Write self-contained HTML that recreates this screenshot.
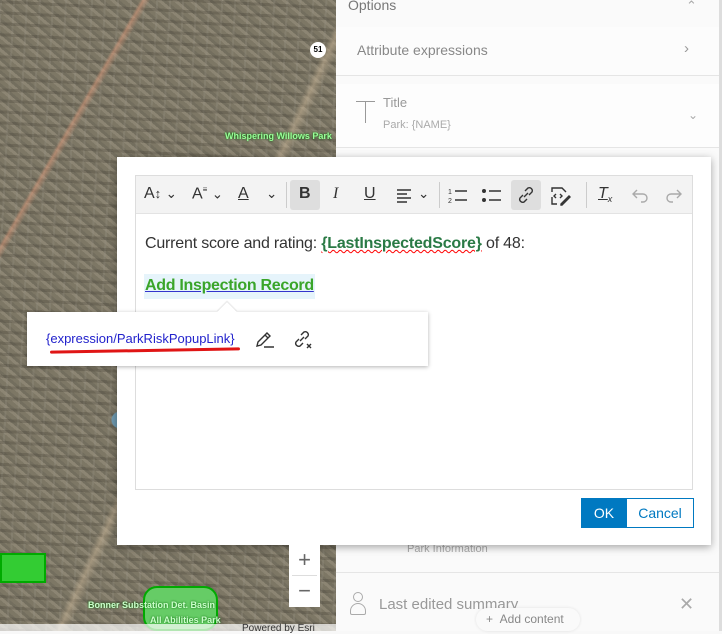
<!DOCTYPE html>
<html><head><style>
*{box-sizing:border-box;margin:0;padding:0}
body{width:722px;height:631px;overflow:hidden;position:relative;font-family:"Liberation Sans",sans-serif;background:#f8f8f8}
.map{position:absolute;left:0;top:0;width:336px;height:631px;background:
radial-gradient(circle at 120px 420px,#6f9ab0 0 8px,transparent 9px),
linear-gradient(120deg,transparent 20%,rgba(210,150,120,.6) 20.5%,transparent 21.5%),
linear-gradient(115deg,transparent 55%,rgba(200,180,150,.5) 56%,transparent 57.5%),
repeating-linear-gradient(3deg,rgba(60,55,45,.25) 0 3px,transparent 3px 11px),
repeating-linear-gradient(93deg,rgba(150,145,130,.3) 0 2px,transparent 2px 13px),
repeating-linear-gradient(40deg,#7d7765 0 4px,#8c8573 4px 7px,#736e5e 7px 10px)}
.panel{position:absolute;left:336px;top:0;width:383px;height:631px;background:#fafafa;color:#777}
.abs{position:absolute}
.modal{position:absolute;left:117px;top:157px;width:594px;height:388px;background:#fff;box-shadow:0 2px 8px rgba(0,0,0,.35)}
.editor{position:absolute;left:18px;top:18px;width:558px;height:315px;border:1px solid #ddd}
.tb{height:38px;background:#f3f3f3;border-bottom:1px solid #e3e3e3;position:relative;font-size:16px;color:#333}
.tb span{position:absolute;top:9px}
.tb svg{position:absolute;top:9px}
.hl{position:absolute;top:4px;width:30px;height:30px;background:#dedede;border-radius:3px}
.sep{position:absolute;top:6px;width:1px;height:26px;background:#ccc}
</style></head><body>
<div class="map"></div>
<div class="abs" style="left:310px;top:42px;width:16px;height:16px;border-radius:50%;background:#fff;font-size:8px;text-align:center;line-height:16px;font-weight:bold;z-index:2">51</div>
<div class="abs" style="left:225px;top:131px;font-size:9px;color:#9f9;font-weight:bold;z-index:2;text-shadow:0 0 2px #060">Whispering Willows Park</div>
<div class="abs" style="left:0;top:553px;width:46px;height:30px;background:#3c3;border:2px solid #0a0;z-index:2"></div>
<div class="abs" style="left:143px;top:586px;width:75px;height:45px;background:#6c6;border:2px solid #0a0;border-radius:14px;z-index:2"></div>
<div class="abs" style="left:88px;top:600px;font-size:9px;color:#cfc;font-weight:bold;z-index:3;text-shadow:0 0 2px #060">Bonner Substation Det. Basin</div>
<div class="abs" style="left:150px;top:615px;font-size:9px;color:#cfc;font-weight:bold;z-index:3;text-shadow:0 0 2px #060">All Abilities Park</div>
<div class="abs" style="left:0;top:624px;width:336px;height:7px;background:rgba(255,255,255,.7);z-index:3"></div>
<div class="abs" style="left:242px;top:623px;font-size:10px;color:#333;z-index:3">Powered by Esri</div>
<div class="abs" style="left:289px;top:545px;width:31px;height:62px;background:#fff;z-index:3;color:#666;font-size:22px;text-align:center;line-height:30px">+<div style="border-top:1px solid #ddd;margin:0 3px">−</div></div>

<div class="panel">
<div class="abs" style="left:12px;top:-3px;font-size:14px">Options</div>
<div class="abs" style="left:350px;top:-2px;font-size:13px;color:#aaa">⌃</div>
<div class="abs" style="left:0;top:27px;width:383px;height:49px;background:#fcfcfc;border-bottom:1px solid #e5e5e5"></div>
<div class="abs" style="left:21px;top:42px;font-size:14px;color:#888">Attribute expressions</div>
<div class="abs" style="left:348px;top:40px;font-size:15px;color:#999">›</div>
<div class="abs" style="left:0;top:84px;width:383px;height:64px;background:#fdfdfd;border-bottom:1px solid #e5e5e5"></div>
<div class="abs" style="left:20px;top:101px;width:19px;height:1px;background:#999"></div>
<div class="abs" style="left:29px;top:101px;width:1px;height:22px;background:#999"></div>
<div class="abs" style="left:47px;top:95px;font-size:13px;color:#999">Title</div>
<div class="abs" style="left:47px;top:119px;font-size:11px;color:#aaa">Park: {NAME}</div>
<div class="abs" style="left:352px;top:108px;font-size:12px;color:#aaa">⌄</div>
<div class="abs" style="left:71px;top:543px;font-size:11px;color:#aaa">Park Information</div>
<div class="abs" style="left:0;top:572px;width:383px;height:1px;background:#e5e5e5"></div>
<div class="abs" style="left:14px;top:603px;width:16px;height:12px;border:1px solid #aaa;border-radius:8px 8px 2px 2px"></div>
<div class="abs" style="left:17px;top:592px;width:10px;height:10px;border:1px solid #aaa;border-radius:50%;background:#fafafa"></div>
<div class="abs" style="left:43px;top:596px;font-size:15px;color:#999">Last edited summary</div>
<div class="abs" style="left:343px;top:594px;font-size:18px;color:#aaa">✕</div>
<div class="abs" style="left:140px;top:608px;width:104px;height:23px;background:#fafafa;border-radius:12px;box-shadow:0 0 3px rgba(0,0,0,.1);font-size:12px;color:#888;padding:4px 0 0 10px">+&nbsp;&nbsp;Add content</div>
</div>
<div class="abs" style="left:719px;top:0;width:3px;height:631px;background:#ddd"></div>

<div class="modal">
<div class="editor">
<div class="tb">
<span style="left:8px">A<span style="position:static;font-size:13px">↕</span> <small>⌄</small></span>
<span style="left:56px">A<sup style="font-size:8px">≡</sup> <small>⌄</small></span>
<span style="left:102px;text-decoration:underline">A</span><span style="left:130px"><small>⌄</small></span>
<div class="sep" style="left:150px"></div>
<div class="hl" style="left:154px"></div>
<span style="left:163px;font-weight:bold">B</span>
<span style="left:197px;font-style:italic;font-family:'Liberation Serif'">I</span>
<span style="left:228px;text-decoration:underline">U</span>
<svg style="left:258px" width="20" height="20" viewBox="0 0 20 20" stroke="#333" stroke-width="1.4"><path d="M3 5h14M3 9h10M3 13h14M3 17h10"/></svg>
<span style="left:282px"><small>⌄</small></span>
<div class="sep" style="left:303px"></div>
<svg style="left:311px" width="22" height="20" viewBox="0 0 22 20" stroke="#333" stroke-width="1.4"><path d="M8 6h12M8 15h12"/><text x="1" y="9" font-size="7" stroke="none" fill="#333">1</text><text x="1" y="18" font-size="7" stroke="none" fill="#333">2</text></svg>
<svg style="left:345px" width="22" height="20" viewBox="0 0 22 20" stroke="#333" stroke-width="1.4"><path d="M8 6h12M8 15h12"/><circle cx="3" cy="6" r="1.3" fill="#333"/><circle cx="3" cy="15" r="1.3" fill="#333"/></svg>
<div class="hl" style="left:375px"></div>
<svg style="left:380px" width="20" height="20" viewBox="0 0 20 20" fill="none" stroke="#333" stroke-width="1.4"><path d="M9 6l3-3a3 3 0 014 4l-3 3M11 14l-3 3a3 3 0 01-4-4l3-3M8 12l4-4"/></svg>
<svg style="left:413px" width="22" height="22" viewBox="0 0 22 22" fill="none" stroke="#333" stroke-width="1.4"><path d="M3 7V3h10l4 4M3 12v7h5M7 9l-2 2 2 2M11 9l2 2-2 2M12 19l8-8 1 1-8 8h-1z"/></svg>
<div class="sep" style="left:450px"></div>
<span style="left:462px;font-style:italic;text-decoration:underline">T<sub style="font-size:9px">x</sub></span>
<svg style="left:494px" width="20" height="20" viewBox="0 0 20 20" fill="none" stroke="#aaa" stroke-width="1.4"><path d="M7 5L3 9l4 4M3 9h10a4 4 0 010 8h-2"/></svg>
<svg style="left:528px" width="20" height="20" viewBox="0 0 20 20" fill="none" stroke="#aaa" stroke-width="1.4"><path d="M13 5l4 4-4 4M17 9H7a4 4 0 000 8h2"/></svg>
</div>
<div class="abs" style="left:9px;top:59px;font-size:16px;color:#333;letter-spacing:-.2px">Current score and rating: <b style="color:#2a7a45;text-decoration:underline wavy red;text-decoration-thickness:1px">{LastInspectedScore}</b> of 48:</div>
<div class="abs" style="left:8px;top:98px;height:25px;background:#e6f4fb;padding:3px 1px;font-size:16px;font-weight:bold;color:#3aa52a;text-decoration:underline;text-decoration-color:#33c;letter-spacing:-.3px">Add Inspection Record</div>
</div>
<div class="abs" style="left:464px;top:341px;width:46px;height:30px;background:#0079c1;color:#fff;font-size:14px;text-align:center;line-height:30px">OK</div>
<div class="abs" style="left:509px;top:341px;width:68px;height:30px;border:1px solid #0079c1;color:#0079c1;font-size:14px;text-align:center;line-height:28px">Cancel</div>
</div>

<div class="abs" style="left:27px;top:312px;width:401px;height:54px;background:#fff;box-shadow:0 1px 4px rgba(0,0,0,.3)"></div>
<div class="abs" style="left:220px;top:305px;width:14px;height:14px;background:#fff;transform:rotate(45deg);box-shadow:-1px -1px 1px rgba(0,0,0,.1)"></div>
<div class="abs" style="left:46px;top:331px;font-size:13px;color:#22c">{expression/ParkRiskPopupLink}</div>
<div class="abs" style="left:50px;top:349px;width:190px;height:3px;background:#e01515;border-radius:2px;transform:rotate(-1deg)"></div>
<svg class="abs" style="left:254px;top:329px" width="22" height="20" viewBox="0 0 22 20" fill="none" stroke="#333" stroke-width="1.4"><path d="M3 17l1-4 9-9 3 3-9 9zM11 6l3 3M10 18h10"/></svg>
<svg class="abs" style="left:292px;top:329px" width="22" height="22" viewBox="0 0 22 22" fill="none" stroke="#333" stroke-width="1.4"><path d="M9 6l3-3a3 3 0 014 4l-3 3M11 14l-3 3a3 3 0 01-4-4l3-3M8 12l4-4M15 15l4 4M19 15l-4 4"/></svg>
</body></html>
